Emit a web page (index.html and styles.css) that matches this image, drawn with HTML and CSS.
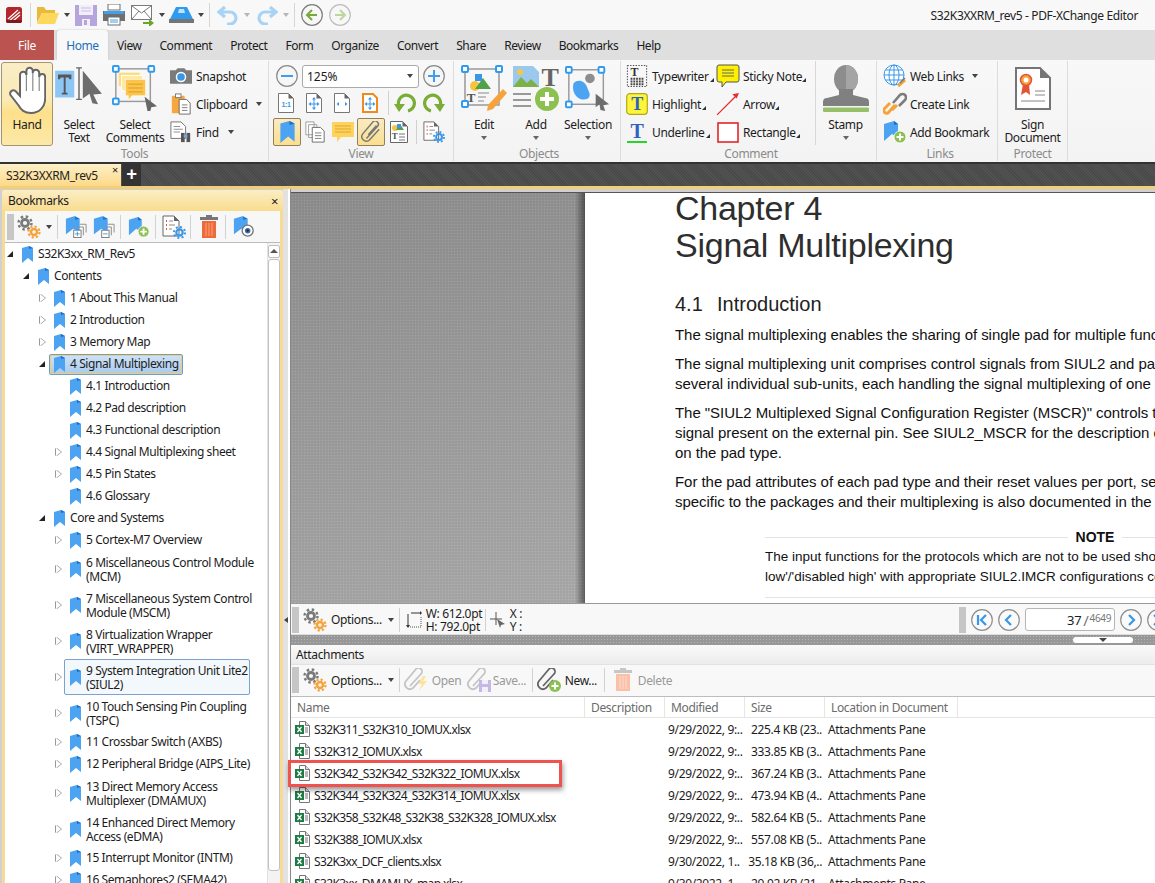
FILE: index.html
```html
<!DOCTYPE html>
<html lang="en">
<head>
<meta charset="utf-8">
<title>S32K3XXRM_rev5 - PDF-XChange Editor</title>
<link rel="stylesheet" href="styles.css">
</head>
<body>
<svg class="defs" aria-hidden="true">
  <defs>
    <symbol id="logo" viewBox="0 0 18 18"><rect x="1" y="1" width="16" height="16" rx="2.5" fill="#b3262b"/><path d="M3 13 L13 4 M4 15 L15 6 M8 15 L15 9" stroke="#fff" stroke-width="1.2" fill="none"/><path d="M1 14h16v1a2 2 0 0 1-2 2H3a2 2 0 0 1-2-2z" fill="#7d1a1e"/></symbol>
    <symbol id="folder" viewBox="0 0 24 20"><path d="M1 18V2h7l2 3h9v3H6z" fill="#e8b93a"/><path d="M1 19 L6 8h17l-4 11z" fill="#fdd85d"/></symbol>
    <symbol id="save" viewBox="0 0 22 22"><path d="M0 1h22v21H0z" fill="#b6a4dc"/><rect x="4" y="1" width="14" height="10" fill="#f2eefa"/><path d="M6 4h10M6 7h10" stroke="#c9bfe3"/><rect x="7" y="15" width="8" height="7" fill="#f2eefa"/><rect x="9" y="16" width="3" height="5" fill="#b6a4dc"/></symbol>
    <symbol id="print" viewBox="0 0 22 22"><rect x="5" y="0" width="12" height="6" fill="#fff" stroke="#6d6d6d"/><path d="M0 7h22v10H0z" fill="#6f6f6f"/><rect x="1" y="7" width="20" height="3" fill="#42a0ea"/><rect x="5" y="13" width="12" height="8" fill="#fff" stroke="#6d6d6d"/><path d="M7 16h8M7 18h8" stroke="#42a0ea"/></symbol>
    <symbol id="mail" viewBox="0 0 24 22"><rect x=".5" y="1.500" width="20" height="14" fill="#fff" stroke="#7a7a7a"/><path d="M1 2l9.500 7L20 2M1 15l7-8M20 15l-7-8" stroke="#7a7a7a" fill="none"/><path d="M12 19h8" stroke="#6aa62e" stroke-width="2"/><path d="M18 15l5 4-5 4z" fill="#6aa62e"/></symbol>
    <symbol id="cloud" viewBox="0 0 25 18"><path d="M7 1h11l6 12H1z" fill="#2e9bf0"/><path d="M10 3h5l1 4H9z" fill="#bfe2fb"/><rect x="0" y="13" width="25" height="4" fill="#757575"/></symbol>
    <symbol id="undo" viewBox="0 0 22 20"><path d="M8 2L2 7l6 5M3 7h10a6 6 0 0 1 0 12h-3" fill="none" stroke="#a9d3f4" stroke-width="3.200"/></symbol>
    <symbol id="redo" viewBox="0 0 22 20"><path d="M14 2l6 5-6 5M19 7H9a6 6 0 0 0 0 12h3" fill="none" stroke="#a9d3f4" stroke-width="3.200"/></symbol>
    <symbol id="back" viewBox="0 0 22 22"><circle cx="11" cy="11" r="10.300" fill="#f7f7f7" stroke="#7d7d7d" stroke-width="1.200"/><path d="M11 6l-5 5 5 5M6 11h10" fill="none" stroke="#76a83a" stroke-width="2"/></symbol>
    <symbol id="fwd" viewBox="0 0 22 22"><circle cx="11" cy="11" r="10.300" fill="#f7f7f7" stroke="#bdbdbd" stroke-width="1.200"/><path d="M11 6l5 5-5 5M16 11H6" fill="none" stroke="#bcd69c" stroke-width="2"/></symbol>
    <symbol id="hand" viewBox="0 0 37 48"><path d="M11 30V9a3.200 3.200 0 0 1 6.400 0V5a3.200 3.200 0 0 1 6.400 0V7a3.200 3.200 0 0 1 6.400 0v4a3 3 0 0 1 6 0v21c0 9-6 15-14 15-7 0-10-3-13-8L1.500 29c-1.500-3 2-6 5-4z" fill="#fff" stroke="#666" stroke-width="2"/><path d="M17.400 9v16M23.800 7v18M30.200 11v14" stroke="#8a8a8a" stroke-width="1.200"/></symbol>
    <symbol id="seltext" viewBox="0 0 50 44"><rect x="0" y="6" width="20" height="28" fill="#8cc6f5"/><path d="M3 10h14v5h-2l-1-2h-3v16h2v2H7v-2h2V13H6l-1 2H3z" fill="#565656"/><path d="M22 3h6M25 3v33M22 36h6" stroke="#666" stroke-width="1.500"/><path d="M29 6l20 24-9 1 5 10-6-1-3-10-7 5z" fill="#6d6d6d"/></symbol>
    <symbol id="selcom" viewBox="0 0 48 48"><rect x="4" y="4" width="36" height="34" fill="none" stroke="#999" stroke-width="1.500"/><rect x="7" y="8" width="22" height="14" fill="#ffdd7e"/><rect x="10" y="11" width="22" height="16" fill="#ffe8a0" stroke="#fff"/><path d="M14 15h21v17H21l-4 5v-5h-3z" fill="#fbc44d" stroke="#fff" stroke-width=".6"/><path d="M17 20h15M17 24h15M17 28h15" stroke="#dc9c23"/><path d="M34 33l13 10-6 1-1 4-3 0z" fill="#666"/><g fill="#fff" stroke="#2e9bf0" stroke-width="2"><rect x="1" y="1" width="6" height="6" rx="1"/><rect x="38" y="1" width="6" height="6" rx="1"/><rect x="1" y="35" width="6" height="6" rx="1"/></g></symbol>
    <symbol id="camera" viewBox="0 0 23 18"><path d="M0 3h6l2-2h7l2 2h6v14H0z" fill="#7b7b7b"/><circle cx="11.500" cy="10" r="5.500" fill="#fff"/><circle cx="11.500" cy="10" r="4" fill="#3a97e8"/></symbol>
    <symbol id="clipboard" viewBox="0 0 22 24"><rect x="1" y="3" width="14" height="19" rx="1" fill="#f6a740"/><rect x="5" y="1" width="6" height="4" fill="#fff" stroke="#777"/><path d="M9 7h8l4 4v12H9z" fill="#fff" stroke="#666"/><path d="M12 13h6M12 16h6M12 19h6" stroke="#777"/></symbol>
    <symbol id="find" viewBox="0 0 24 24"><path d="M1 1h11l5 5v13H1z" fill="#fff" stroke="#6d6d6d"/><path d="M4 6h7M4 9h10M4 12h7" stroke="#888"/><rect x="12" y="13" width="4" height="10" fill="#555"/><rect x="18" y="13" width="4" height="10" fill="#555"/><rect x="15" y="15" width="4" height="3" fill="#78a8d8"/></symbol>
    <symbol id="minus" viewBox="0 0 22 22"><circle cx="11" cy="11" r="10.300" fill="#f6f6f6" stroke="#8a8a8a" stroke-width="1.200"/><path d="M5 11h12" stroke="#3f9cee" stroke-width="2"/></symbol>
    <symbol id="plus" viewBox="0 0 22 22"><circle cx="11" cy="11" r="10.300" fill="#f6f6f6" stroke="#8a8a8a" stroke-width="1.200"/><path d="M5 11h12M11 5v12" stroke="#3f9cee" stroke-width="2"/></symbol>
    <symbol id="doc11" viewBox="0 0 16 20"><path d="M.5.500h10l5 5v14H.5z" fill="#fff" stroke="#777"/><path d="M10.500.500v5h5z" fill="#666"/><text x="8" y="14" font-size="7" font-family="Liberation Sans" text-anchor="middle" fill="#3a97e8" font-weight="700">1:1</text></symbol>
    <symbol id="docfit" viewBox="0 0 16 20"><path d="M.5.500h10l5 5v14H.5z" fill="#fff" stroke="#777"/><path d="M10.500.500v5h5z" fill="#666"/><path d="M8 4l2 2.500H6zM8 17l2-2.500H6zM2.500 11L5 9v4zM13.500 11L11 9v4z" fill="#3a97e8"/><path d="M8 6v9M4 11h8" stroke="#3a97e8"/></symbol>
    <symbol id="docwid" viewBox="0 0 16 20"><path d="M.5.500h10l5 5v14H.5z" fill="#fff" stroke="#777"/><path d="M10.500.500v5h5z" fill="#666"/><path d="M2.500 11L5 9v4zM13.500 11L11 9v4z" fill="#3a97e8"/></symbol>
    <symbol id="docvis" viewBox="0 0 16 20"><path d="M1 1h10l4 4v14H1z" fill="#fff" stroke="#f08a1c" stroke-width="2"/><path d="M8 4l2 2.500H6zM8 17l2-2.500H6zM2.500 11L5 9v4zM13.500 11L11 9v4z" fill="#3a97e8"/><path d="M8 6v9M4 11h8" stroke="#3a97e8"/></symbol>
    <symbol id="rotl" viewBox="0 0 22 22"><path d="M6 16a8 8 0 1 1 8 3" fill="none" stroke="#7aac36" stroke-width="3.200"/><path d="M0 12h11l-6 8z" fill="#7aac36"/></symbol>
    <symbol id="rotr" viewBox="0 0 22 22"><path d="M16 16a8 8 0 1 0-8 3" fill="none" stroke="#7aac36" stroke-width="3.200"/><path d="M22 12H11l6 8z" fill="#7aac36"/></symbol>
    <symbol id="bm" viewBox="0 0 11 17"><path d="M0 2L7 0l4 2v14l-5-4-6 5z" fill="#4ba3f2"/><path d="M7 0l4 2-4 1z" fill="#1f6fc0"/></symbol>
    <symbol id="pages" viewBox="0 0 22 24"><path d="M1 1h9v14H1zM4 4h9v14H4z" fill="#fff" stroke="#999"/><path d="M8 7h9l4 4v12H8z" fill="#fff" stroke="#666"/><path d="M11 13h7M11 16h7M11 19h7" stroke="#777"/></symbol>
    <symbol id="note" viewBox="0 0 22 22"><path d="M0 1h22v15H9l-4 5v-5H0z" fill="#fed35d"/><path d="M3 5h16M3 8h16M3 11h16" stroke="#e2a72d"/></symbol>
    <symbol id="clip" viewBox="0 0 24 24"><path d="M7 19L19 6a3.500 3.500 0 0 0-5-5L3 14a5 5 0 0 0 7 7l11-12M9 15l9-10" fill="none" stroke="#777" stroke-width="1.600"/></symbol>
    <symbol id="objdoc" viewBox="0 0 18 22"><path d="M.5.500h12l5 5v16H.5z" fill="#fff" stroke="#666"/><path d="M12.500.500v5h5z" fill="#666"/><circle cx="5" cy="7" r="3" fill="#f8c43d"/><path d="M6 9l4-6 4 6z" fill="#4fa24a"/><rect x="7" y="3" width="4" height="4" fill="#3a97e8"/><text x="4.500" y="18" font-size="9" font-family="Liberation Serif" font-weight="700" text-anchor="middle" fill="#555">T</text><path d="M9 13h6M9 16h6M9 19h6" stroke="#777"/></symbol>
    <symbol id="docset" viewBox="0 0 24 24"><path d="M1 1h11l5 5v15H1z" fill="#fff" stroke="#666"/><path d="M12 1v5h5z" fill="#666"/><path d="M4 6h1M4 10h1M4 14h1" stroke="#e25436" stroke-width="2"/><path d="M7 6h4M7 10h6M7 14h3" stroke="#888"/><circle cx="17.500" cy="17.500" r="3.200" fill="none" stroke="#3a97e8" stroke-width="2.200"/><circle cx="17.500" cy="17.500" r="5.500" fill="none" stroke="#3a97e8" stroke-width="2" stroke-dasharray="2 2.300"/></symbol>
    <symbol id="edit" viewBox="0 0 46 46"><rect x="4" y="4" width="34" height="36" fill="none" stroke="#999" stroke-width="1.500"/><circle cx="14" cy="21" r="5" fill="#f8c43d"/><path d="M14 24l8-11 8 11z" fill="#4fa24a"/><rect x="14" y="9" width="7" height="7" fill="#3a97e8"/><text x="10" y="37" font-size="13" font-family="Liberation Serif" font-weight="700" text-anchor="middle" fill="#555">T</text><path d="M17 28h11M17 32h8M17 36h6" stroke="#888"/><path d="M42 24l4 4-14 16-6 2 1-6z" fill="#f5a33a"/><g fill="#fff" stroke="#2e9bf0" stroke-width="2"><rect x="1" y="1" width="6" height="6" rx="1"/><rect x="35" y="1" width="6" height="6" rx="1"/><rect x="1" y="36" width="6" height="6" rx="1"/></g></symbol>
    <symbol id="add" viewBox="0 0 46 46"><path d="M0 1h20l6 6v15H0z" fill="#9bc9ee"/><path d="M0 22l8-10 6 6 4-4 8 8z" fill="#7eb04a"/><circle cx="7" cy="7" r="3" fill="#f5c64a"/><text x="37" y="21" font-size="26" font-family="Liberation Serif" font-weight="700" text-anchor="middle" fill="#666">T</text><path d="M0 29h18M0 35h18M0 41h18" stroke="#999" stroke-width="2"/><circle cx="34" cy="34" r="12" fill="#8cc152"/><path d="M27 34h14M34 27v14" stroke="#fff" stroke-width="4"/></symbol>
    <symbol id="selobj" viewBox="0 0 48 46"><rect x="4" y="4" width="36" height="36" fill="none" stroke="#999" stroke-width="1.500"/><circle cx="26" cy="13" r="5" fill="#8e8e8e"/><path d="M9 18c5-5 12-2 14 4s4 7 2 11c-4 4-12 2-15-4-2-4-2-8-1-11z" fill="#4ba3f2"/><path d="M32 29l14 11-6 1 2 6-5-1-1-6-4 3z" fill="#6d6d6d"/><g fill="#fff" stroke="#2e9bf0" stroke-width="2"><rect x="1" y="1" width="6" height="6" rx="1"/><rect x="35" y="1" width="6" height="6" rx="1"/><rect x="1" y="37" width="6" height="6" rx="1"/></g></symbol>
    <symbol id="typewriter" viewBox="0 0 22 24"><rect x=".5" y=".5" width="21" height="23" fill="none" stroke="#333" stroke-dasharray="1.500 1.500"/><text x="8" y="12" font-size="13" font-family="Liberation Serif" font-weight="700" text-anchor="middle" fill="#333">T</text><path d="M4 15h14M4 18h14M4 21h14" stroke="#444" stroke-width="2" stroke-dasharray="2 1"/></symbol>
    <symbol id="sticky" viewBox="0 0 24 24"><path d="M3 1h18a2 2 0 0 1 2 2v13a2 2 0 0 1-2 2H10l-4 5v-5H3a2 2 0 0 1-2-2V3a2 2 0 0 1 2-2z" fill="#fdf100" stroke="#555"/><path d="M6 6h12M6 9h12M6 12h12" stroke="#666"/></symbol>
    <symbol id="highlight" viewBox="0 0 22 22"><rect x=".7" y=".7" width="20.600" height="20.600" rx="3" fill="#fdf53a" stroke="#b3a818" stroke-width="1.200"/><text x="11" y="17" font-size="18" font-family="Liberation Serif" font-weight="700" text-anchor="middle" fill="#2f62c0">T</text></symbol>
    <symbol id="arrow" viewBox="0 0 22 22"><path d="M1 21L19 3" stroke="#e03030" stroke-width="1.200"/><path d="M21 1l-6 1 4 4z" fill="#e03030"/></symbol>
    <symbol id="underline" viewBox="0 0 22 22"><text x="11" y="17" font-size="20" font-family="Liberation Serif" font-weight="700" text-anchor="middle" fill="#2f62c0">T</text><path d="M1 21h20" stroke="#2ad42a" stroke-width="2"/></symbol>
    <symbol id="rect" viewBox="0 0 24 22"><rect x="2" y="2" width="20" height="19" fill="#fff" stroke="#e01818" stroke-width="1.500"/></symbol>
    <symbol id="stamp" viewBox="0 0 46 47"><ellipse cx="23" cy="14" rx="12" ry="14" fill="#8d8d8d"/><path d="M23 0a12 14 0 0 1 0 28z" fill="#a5a5a5"/><path d="M16 24h14v6l12 3a4 4 0 0 1 4 4v4H0v-4a4 4 0 0 1 4-4l12-3z" fill="#808080"/><rect x="0" y="42.500" width="46" height="4.500" rx="1" fill="#98c06a"/></symbol>
    <symbol id="globe" viewBox="0 0 24 24"><circle cx="11" cy="11" r="10" fill="#fff" stroke="#3a97e8"/><ellipse cx="11" cy="11" rx="5" ry="10" fill="none" stroke="#3a97e8"/><path d="M1 11h20M2.500 6h17M2.500 16h17M11 1v20" stroke="#3a97e8"/><path d="M15 22l7-6" stroke="#f5a33a" stroke-width="3"/><path d="M17 19l5-5" stroke="#777" stroke-width="1.500"/></symbol>
    <symbol id="link" viewBox="0 0 24 24"><path d="M10 11l7-8a3.500 3.500 0 0 1 5 5l-6 6" fill="none" stroke="#7d7d7d" stroke-width="2.600"/><path d="M12 13l-7 8a3 3 0 0 1-4-4l6-6" fill="none" stroke="#f5a33a" stroke-width="3"/><path d="M9 18l5-5" stroke="#f5a33a" stroke-width="3"/></symbol>
    <symbol id="bmadd" viewBox="0 0 24 24"><path d="M1 4l10-3 4 3v14l-6-4-8 7z" fill="#4ba3f2"/><path d="M11 1l4 3-4 1z" fill="#1f6fc0"/><circle cx="17" cy="17" r="6" fill="#8cc152" stroke="#fff" stroke-width=".8"/><path d="M13.500 17h7M17 13.500v7" stroke="#fff" stroke-width="2"/></symbol>
    <symbol id="sign" viewBox="0 0 36 43"><path d="M1 1h24l10 10v31H1z" fill="#fff" stroke="#757575" stroke-width="2"/><path d="M25 1v10h10z" fill="#757575"/><path d="M8 17l-2 11 5-3 4 3-1-11z" fill="#e25436"/><circle cx="11" cy="13" r="5.500" fill="#f5a33a" stroke="#e25436" stroke-width="1.500"/><circle cx="11" cy="13" r="2.500" fill="#fff"/><path d="M20 24h10M20 28h10M6 34h24" stroke="#888"/></symbol>
    <symbol id="gears" viewBox="0 0 24 24"><circle cx="8" cy="8" r="3.500" fill="none" stroke="#7a7a7a" stroke-width="2.800"/><circle cx="8" cy="8" r="6.500" fill="none" stroke="#7a7a7a" stroke-width="2.400" stroke-dasharray="2.500 2.600"/><circle cx="17" cy="17" r="3" fill="none" stroke="#f5a33a" stroke-width="2.400"/><circle cx="17" cy="17" r="5.500" fill="none" stroke="#f5a33a" stroke-width="2.200" stroke-dasharray="2.200 2.100"/></symbol>
    <symbol id="bmexp" viewBox="0 0 22 24"><path d="M0 3l10-3 5 3v15l-7-4-8 6z" fill="#4ba3f2"/><path d="M10 1l5 2-5 1z" fill="#1f6fc0"/><path d="M15 9h7v9M12 12h7v9" fill="none" stroke="#888"/><rect x="8.500" y="15.500" width="8" height="8" fill="#fff" stroke="#777"/><path d="M10 19.500h5M12.500 17v5" stroke="#3a97e8"/></symbol>
    <symbol id="bmcol" viewBox="0 0 22 24"><path d="M0 3l10-3 5 3v15l-7-4-8 6z" fill="#4ba3f2"/><path d="M10 1l5 2-5 1z" fill="#1f6fc0"/><path d="M15 9h7v9M12 12h7v9" fill="none" stroke="#888"/><rect x="8.500" y="15.500" width="8" height="8" fill="#fff" stroke="#777"/><path d="M10 19.500h5" stroke="#3a97e8"/></symbol>
    <symbol id="trash" viewBox="0 0 18 24"><rect x="6" y="0" width="6" height="3" fill="#777"/><rect x="0" y="2" width="18" height="3" fill="#777"/><path d="M2 6h14v17H2z" fill="#ef6a3a"/><path d="M6 8v13M9 8v13M12 8v13" stroke="#f9a27f"/></symbol>
    <symbol id="trashoff" viewBox="0 0 18 24"><rect x="6" y="0" width="6" height="3" fill="#c6c6c6"/><rect x="0" y="2" width="18" height="3" fill="#c6c6c6"/><path d="M2 6h14v17H2z" fill="#fbc0a8"/><path d="M6 8v13M9 8v13M12 8v13" stroke="#fddccf"/></symbol>
    <symbol id="bmeye" viewBox="0 0 22 24"><path d="M0 3l10-3 5 3v15l-7-4-8 6z" fill="#4ba3f2"/><path d="M10 1l5 2-5 1z" fill="#1f6fc0"/><circle cx="15" cy="16" r="6" fill="#fff" stroke="#777" stroke-width="1.500"/><circle cx="15" cy="16" r="3" fill="#3a6ea8"/><circle cx="15" cy="16" r="1.200" fill="#222"/></symbol>
    <symbol id="dims" viewBox="0 0 16 18"><path d="M5 2h10M2 3v13" stroke="#333"/><path d="M14 0l2 2-2 2zM0 14l2 3 2-3z" fill="#333"/><path d="M4 16h11V5" stroke="#555" stroke-dasharray="1 1" fill="none"/></symbol>
    <symbol id="cross" viewBox="0 0 16 18"><path d="M0 8h12M6 1v13" stroke="#555"/><path d="M7 8l8 5-4 1-1 3z" fill="#666"/></symbol>
    <symbol id="first" viewBox="0 0 22 22"><circle cx="11" cy="11" r="10.300" fill="#fafafa" stroke="#8f8f8f" stroke-width="1.200"/><path d="M7 6v10M15 6l-5 5 5 5" fill="none" stroke="#3a97e8" stroke-width="2.200"/></symbol>
    <symbol id="prev" viewBox="0 0 22 22"><circle cx="11" cy="11" r="10.300" fill="#fafafa" stroke="#8f8f8f" stroke-width="1.200"/><path d="M13 6l-5 5 5 5" fill="none" stroke="#3a97e8" stroke-width="2.200"/></symbol>
    <symbol id="next" viewBox="0 0 22 22"><circle cx="11" cy="11" r="10.300" fill="#fafafa" stroke="#8f8f8f" stroke-width="1.200"/><path d="M9 6l5 5-5 5" fill="none" stroke="#3a97e8" stroke-width="2.200"/></symbol>
    <symbol id="last" viewBox="0 0 22 22"><circle cx="11" cy="11" r="10.300" fill="#fafafa" stroke="#8f8f8f" stroke-width="1.200"/><path d="M15 6v10M7 6l5 5-5 5" fill="none" stroke="#3a97e8" stroke-width="2.200"/></symbol>
    <symbol id="clipopen" viewBox="0 0 24 24"><path d="M6 18L17 6a3.500 3.500 0 0 0-5-5L2 13a5 5 0 0 0 7 7l7-8" fill="none" stroke="#c4c4c4" stroke-width="1.800"/><path d="M19 8l-5 8h4l-3 7 8-10h-4l3-5z" fill="#fbe39a"/></symbol>
    <symbol id="clipsave" viewBox="0 0 24 24"><path d="M6 18L17 6a3.500 3.500 0 0 0-5-5L2 13a5 5 0 0 0 7 7l7-8" fill="none" stroke="#c4c4c4" stroke-width="1.800"/><rect x="12" y="12" width="12" height="12" fill="#c6b8e4"/><rect x="15" y="12" width="6" height="4" fill="#f2eefa"/><rect x="15" y="19" width="6" height="5" fill="#f2eefa"/></symbol>
    <symbol id="clipnew" viewBox="0 0 24 24"><path d="M6 18L17 6a3.500 3.500 0 0 0-5-5L2 13a5 5 0 0 0 7 7l7-8" fill="none" stroke="#666" stroke-width="1.800"/><circle cx="18" cy="18" r="6" fill="#8cc152"/><path d="M14.500 18h7M18 14.500v7" stroke="#fff" stroke-width="2"/></symbol>
    <symbol id="xls" viewBox="0 0 15 16"><path d="M4.500.500h6l4 4v11h-10z" fill="#fff" stroke="#777"/><path d="M10.500.500v4h4" fill="#ddd" stroke="#777"/><rect x="0" y="4" width="9" height="9" fill="#1e7b45"/><path d="M2.500 6l4 5M6.500 6l-4 5" stroke="#fff" stroke-width="1.300"/><path d="M10 7h3M10 9h3M10 11h3" stroke="#777"/></symbol>
  </defs>
</svg>

<div class="app">
  <header class="qat">
    <svg class="i18 q-logo"><use href="#logo"/></svg>
    <span class="q-sep"></span>
    <svg class="q-folder"><use href="#folder"/></svg><span class="drop q-d1"></span>
    <svg class="i22 q-save"><use href="#save"/></svg>
    <svg class="i22 q-print"><use href="#print"/></svg>
    <svg class="q-mail"><use href="#mail"/></svg><span class="drop q-d2"></span>
    <svg class="q-cloud"><use href="#cloud"/></svg><span class="drop q-d3"></span>
    <span class="q-sep q-s2"></span>
    <svg class="q-undo"><use href="#undo"/></svg><span class="drop off q-d4"></span>
    <svg class="q-undo q-redo"><use href="#redo"/></svg><span class="drop off q-d5"></span>
    <span class="q-sep q-s3"></span>
    <svg class="i22 q-back"><use href="#back"/></svg>
    <svg class="i22 q-fwd"><use href="#fwd"/></svg>
    <span class="title">S32K3XXRM_rev5 - PDF-XChange Editor</span>
  </header>

  <nav class="tabs">
    <span class="tab-file">File</span>
    <span class="tab active">Home</span>
    <span class="tab">View</span><span class="tab">Comment</span><span class="tab">Protect</span><span class="tab">Form</span><span class="tab">Organize</span><span class="tab">Convert</span><span class="tab">Share</span><span class="tab">Review</span><span class="tab">Bookmarks</span><span class="tab">Help</span>
  </nav>

  <section class="ribbon">
    <div class="group g-tools">
      <div class="gbody">
        <div class="big hand"><svg class="i-hand"><use href="#hand"/></svg><span class="lbl">Hand</span></div>
        <div class="big w-seltext"><svg class="i-seltext"><use href="#seltext"/></svg><span class="lbl">Select<br>Text</span></div>
        <div class="big w-selcom"><svg class="i46"><use href="#selcom"/></svg><span class="lbl">Select<br>Comments</span></div>
        <div class="col c-tools">
          <div class="srow"><svg class="i22"><use href="#camera"/></svg><span>Snapshot</span></div>
          <div class="srow"><svg class="i22"><use href="#clipboard"/></svg><span>Clipboard</span><span class="drop d-gap"></span></div>
          <div class="srow"><svg class="i22"><use href="#find"/></svg><span>Find</span><span class="drop d-gap"></span></div>
        </div>
      </div>
      <div class="glabel">Tools</div>
    </div>

    <div class="group g-view">
      <div class="gbody vcol">
        <div class="vrow1">
          <svg class="i22"><use href="#minus"/></svg>
          <div class="combo"><span>125%</span><span class="drop"></span></div>
          <svg class="i22"><use href="#plus"/></svg>
        </div>
        <div class="vrow2">
          <svg class="i-doc"><use href="#doc11"/></svg>
          <svg class="i-doc"><use href="#docfit"/></svg>
          <svg class="i-doc"><use href="#docwid"/></svg>
          <svg class="i-doc"><use href="#docvis"/></svg>
          <span class="vsep"></span>
          <svg class="i22"><use href="#rotl"/></svg>
          <svg class="i22"><use href="#rotr"/></svg>
        </div>
        <div class="vrow3">
          <span class="tog on"><svg class="i-bm22"><use href="#bm"/></svg></span>
          <span class="tog"><svg class="i22"><use href="#pages"/></svg></span>
          <span class="tog"><svg class="i22"><use href="#note"/></svg></span>
          <span class="tog on"><svg class="i22"><use href="#clip"/></svg></span>
          <span class="tog"><svg class="i-obj"><use href="#objdoc"/></svg></span>
          <span class="vsep v3"></span>
          <svg class="i22"><use href="#docset"/></svg>
        </div>
      </div>
      <div class="glabel">View</div>
    </div>

    <div class="group g-obj">
      <div class="gbody">
        <div class="big w-obj"><svg class="i46"><use href="#edit"/></svg><span class="lbl">Edit</span><span class="drop"></span></div>
        <div class="big w-obj"><svg class="i46"><use href="#add"/></svg><span class="lbl">Add</span><span class="drop"></span></div>
        <div class="big w-obj"><svg class="i46"><use href="#selobj"/></svg><span class="lbl">Selection</span><span class="drop"></span></div>
      </div>
      <div class="glabel">Objects</div>
    </div>

    <div class="group g-com">
      <div class="gbody">
        <div class="col c-com1">
          <div class="srow"><svg class="i22"><use href="#typewriter"/></svg><span>Typewriter</span><i class="corner"></i></div>
          <div class="srow"><svg class="i22"><use href="#highlight"/></svg><span>Highlight</span><i class="corner"></i></div>
          <div class="srow"><svg class="i22"><use href="#underline"/></svg><span>Underline</span><i class="corner"></i></div>
        </div>
        <div class="col c-com2">
          <div class="srow"><svg class="i24"><use href="#sticky"/></svg><span>Sticky Note</span><i class="corner"></i></div>
          <div class="srow"><svg class="i24"><use href="#arrow"/></svg><span>Arrow</span><i class="corner"></i></div>
          <div class="srow"><svg class="i24"><use href="#rect"/></svg><span>Rectangle</span><i class="corner"></i></div>
        </div>
        <span class="gsep"></span>
        <div class="big w-stamp"><svg class="i-stamp"><use href="#stamp"/></svg><span class="lbl">Stamp</span><span class="drop"></span></div>
      </div>
      <div class="glabel">Comment</div>
    </div>

    <div class="group g-links">
      <div class="gbody">
        <div class="col c-links">
          <div class="srow"><svg class="i24"><use href="#globe"/></svg><span>Web Links</span><span class="drop d-gap"></span></div>
          <div class="srow"><svg class="i24"><use href="#link"/></svg><span>Create Link</span></div>
          <div class="srow"><svg class="i24"><use href="#bmadd"/></svg><span>Add Bookmark</span></div>
        </div>
      </div>
      <div class="glabel">Links</div>
    </div>

    <div class="group g-prot">
      <div class="gbody">
        <div class="big w-sign"><svg class="i-sign"><use href="#sign"/></svg><span class="lbl">Sign<br>Document</span></div>
      </div>
      <div class="glabel">Protect</div>
    </div>
  </section>

  <div class="docbar">
    <div class="doctab"><span>S32K3XXRM_rev5</span><b>×</b></div>
    <div class="newtab">+</div>
  </div>

  <main class="main">
    <aside class="pane">
      <div class="pane-title"><span>Bookmarks</span><b>×</b></div>
      <div class="pane-tools">
        <span class="grip"></span>
        <svg class="i24 ml3"><use href="#gears"/></svg><span class="drop ml5"></span>
        <span class="tsep ml5"></span>
        <svg class="i22 ml7"><use href="#bmexp"/></svg><svg class="i22 ml6"><use href="#bmcol"/></svg>
        <span class="tsep ml5"></span>
        <svg class="i22 ml7"><use href="#bmadd"/></svg>
        <span class="tsep ml5"></span>
        <svg class="i24 ml6"><use href="#docset"/></svg>
        <span class="tsep ml4"></span>
        <svg class="i-trash ml9"><use href="#trash"/></svg>
        <span class="tsep ml7"></span>
        <svg class="i22 ml7"><use href="#bmeye"/></svg>
      </div>
      <div class="tree-wrap">
        <div class="tree">
          <div class="row l0"><i class="tw open"></i><div class="item"><svg class="bm"><use href="#bm"/></svg><span>S32K3xx_RM_Rev5</span></div></div>
          <div class="row l1"><i class="tw open"></i><div class="item"><svg class="bm"><use href="#bm"/></svg><span>Contents</span></div></div>
          <div class="row l2"><i class="tw"></i><div class="item"><svg class="bm"><use href="#bm"/></svg><span>1 About This Manual</span></div></div>
          <div class="row l2"><i class="tw"></i><div class="item"><svg class="bm"><use href="#bm"/></svg><span>2 Introduction</span></div></div>
          <div class="row l2"><i class="tw"></i><div class="item"><svg class="bm"><use href="#bm"/></svg><span>3 Memory Map</span></div></div>
          <div class="row l2"><i class="tw open"></i><div class="item sel"><svg class="bm"><use href="#bm"/></svg><span>4 Signal Multiplexing</span></div></div>
          <div class="row l3"><i class="tw none"></i><div class="item"><svg class="bm"><use href="#bm"/></svg><span>4.1 Introduction</span></div></div>
          <div class="row l3"><i class="tw none"></i><div class="item"><svg class="bm"><use href="#bm"/></svg><span>4.2 Pad description</span></div></div>
          <div class="row l3"><i class="tw none"></i><div class="item"><svg class="bm"><use href="#bm"/></svg><span>4.3 Functional description</span></div></div>
          <div class="row l3"><i class="tw"></i><div class="item"><svg class="bm"><use href="#bm"/></svg><span>4.4 Signal Multiplexing sheet</span></div></div>
          <div class="row l3"><i class="tw"></i><div class="item"><svg class="bm"><use href="#bm"/></svg><span>4.5 Pin States</span></div></div>
          <div class="row l3"><i class="tw none"></i><div class="item"><svg class="bm"><use href="#bm"/></svg><span>4.6 Glossary</span></div></div>
          <div class="row l2"><i class="tw open"></i><div class="item"><svg class="bm"><use href="#bm"/></svg><span>Core and Systems</span></div></div>
          <div class="row l3"><i class="tw"></i><div class="item"><svg class="bm"><use href="#bm"/></svg><span>5 Cortex-M7 Overview</span></div></div>
          <div class="row l3 two"><i class="tw"></i><div class="item"><svg class="bm"><use href="#bm"/></svg><span>6 Miscellaneous Control Module<br>(MCM)</span></div></div>
          <div class="row l3 two"><i class="tw"></i><div class="item"><svg class="bm"><use href="#bm"/></svg><span>7 Miscellaneous System Control<br>Module (MSCM)</span></div></div>
          <div class="row l3 two"><i class="tw"></i><div class="item"><svg class="bm"><use href="#bm"/></svg><span>8 Virtualization Wrapper<br>(VIRT_WRAPPER)</span></div></div>
          <div class="row l3 two"><i class="tw"></i><div class="item boxed"><svg class="bm"><use href="#bm"/></svg><span>9 System Integration Unit Lite2<br>(SIUL2)</span></div></div>
          <div class="row l3 two"><i class="tw"></i><div class="item"><svg class="bm"><use href="#bm"/></svg><span>10 Touch Sensing Pin Coupling<br>(TSPC)</span></div></div>
          <div class="row l3"><i class="tw"></i><div class="item"><svg class="bm"><use href="#bm"/></svg><span>11 Crossbar Switch (AXBS)</span></div></div>
          <div class="row l3"><i class="tw"></i><div class="item"><svg class="bm"><use href="#bm"/></svg><span>12 Peripheral Bridge (AIPS_Lite)</span></div></div>
          <div class="row l3 two"><i class="tw"></i><div class="item"><svg class="bm"><use href="#bm"/></svg><span>13 Direct Memory Access<br>Multiplexer (DMAMUX)</span></div></div>
          <div class="row l3 two"><i class="tw"></i><div class="item"><svg class="bm"><use href="#bm"/></svg><span>14 Enhanced Direct Memory<br>Access (eDMA)</span></div></div>
          <div class="row l3"><i class="tw"></i><div class="item"><svg class="bm"><use href="#bm"/></svg><span>15 Interrupt Monitor (INTM)</span></div></div>
          <div class="row l3"><i class="tw"></i><div class="item"><svg class="bm"><use href="#bm"/></svg><span>16 Semaphores2 (SEMA42)</span></div></div>
        </div>
        <div class="scroll"><div class="sc-up"></div><div class="sc-thumb"></div></div>
      </div>
    </aside>

    <div class="split"><i></i></div>

    <div class="right">
      <div class="docview">
        <div class="canvas"></div>
        <article class="page">
          <h1>Chapter 4<br>Signal Multiplexing</h1>
          <h2><span>4.1</span>Introduction</h2>
          <p>The signal multiplexing enables the sharing of single pad for multiple functions.</p>
          <p>The signal multiplexing unit comprises control signals from SIUL2 and pad signals, and<br>several individual sub-units, each handling the signal multiplexing of one pad.</p>
          <p>The "SIUL2 Multiplexed Signal Configuration Register (MSCR)" controls the function of the<br>signal present on the external pin. See SIUL2_MSCR for the description of the options, depending<br>on the pad type.</p>
          <p>For the pad attributes of each pad type and their reset values per port, see the attachments,<br>specific to the packages and their multiplexing is also documented in the attachments.</p>
          <div class="note">
            <div class="note-head"><span>NOTE</span></div>
            <div class="note-body">The input functions for the protocols which are not to be used should be configured as 'disabled<br>low'/'disabled high' with appropriate SIUL2.IMCR configurations consistently.</div>
          </div>
        </article>
      </div>

      <div class="status">
        <span class="grip"></span>
        <svg class="i24"><use href="#gears"/></svg>
        <span class="opt">Options...</span><span class="drop"></span>
        <span class="tsep"></span>
        <svg class="i-dim"><use href="#dims"/></svg>
        <div class="dimtext"><span>W: 612.0pt</span><span>H: 792.0pt</span></div>
        <span class="tsep s-short"></span>
        <svg class="i-cross"><use href="#cross"/></svg>
        <div class="dimtext xy"><span>X :</span><span>Y :</span></div>
        <div class="pager">
          <span class="grip"></span>
          <svg class="i22"><use href="#first"/></svg>
          <svg class="i22"><use href="#prev"/></svg>
          <div class="pageinput"><span>37</span><em>/</em><small>4649</small></div>
          <svg class="i22"><use href="#next"/></svg>
          <svg class="i22"><use href="#last"/></svg>
        </div>
      </div>

      <div class="band"><span class="handle"></span></div>

      <section class="attach">
        <div class="att-title">Attachments</div>
        <div class="att-tools">
          <span class="grip"></span>
          <svg class="i24"><use href="#gears"/></svg>
          <span class="opt">Options...</span><span class="drop"></span>
          <span class="tsep"></span>
          <svg class="i24"><use href="#clipopen"/></svg><span class="off t-open">Open</span>
          <svg class="i24"><use href="#clipsave"/></svg><span class="off t-save">Save...</span>
          <span class="tsep"></span>
          <svg class="i24"><use href="#clipnew"/></svg><span class="t-new">New...</span>
          <span class="tsep"></span>
          <svg class="i-trash t-trash"><use href="#trashoff"/></svg><span class="off t-del">Delete</span>
        </div>
        <div class="grid head">
          <span>Name</span><span>Description</span><span>Modified</span><span>Size</span><span>Location in Document</span>
        </div>
        <div class="rows">
          <div class="grid"><span class="fname"><svg class="xls"><use href="#xls"/></svg>S32K311_S32K310_IOMUX.xlsx</span><span></span><span>9/29/2022, 9:..</span><span class="sz">225.4 KB (23..</span><span>Attachments Pane</span></div>
          <div class="grid"><span class="fname"><svg class="xls"><use href="#xls"/></svg>S32K312_IOMUX.xlsx</span><span></span><span>9/29/2022, 9:..</span><span class="sz">333.85 KB (3..</span><span>Attachments Pane</span></div>
          <div class="grid"><span class="fname"><svg class="xls"><use href="#xls"/></svg>S32K342_S32K342_S32K322_IOMUX.xlsx</span><span></span><span>9/29/2022, 9:..</span><span class="sz">367.24 KB (3..</span><span>Attachments Pane</span></div>
          <div class="grid"><span class="fname"><svg class="xls"><use href="#xls"/></svg>S32K344_S32K324_S32K314_IOMUX.xlsx</span><span></span><span>9/29/2022, 9:..</span><span class="sz">473.94 KB (4..</span><span>Attachments Pane</span></div>
          <div class="grid"><span class="fname"><svg class="xls"><use href="#xls"/></svg>S32K358_S32K48_S32K38_S32K328_IOMUX.xlsx</span><span></span><span>9/29/2022, 9:..</span><span class="sz">582.64 KB (5..</span><span>Attachments Pane</span></div>
          <div class="grid"><span class="fname"><svg class="xls"><use href="#xls"/></svg>S32K388_IOMUX.xlsx</span><span></span><span>9/29/2022, 9:..</span><span class="sz">557.08 KB (5..</span><span>Attachments Pane</span></div>
          <div class="grid"><span class="fname"><svg class="xls"><use href="#xls"/></svg>S32K3xx_DCF_clients.xlsx</span><span></span><span>9/30/2022, 1..</span><span class="sz">35.18 KB (36,..</span><span>Attachments Pane</span></div>
          <div class="grid"><span class="fname"><svg class="xls"><use href="#xls"/></svg>S32K3xx_DMAMUX_map.xlsx</span><span></span><span>9/30/2022, 1..</span><span class="sz">20.92 KB (21..</span><span>Attachments Pane</span></div>
          <div class="redbox"></div>
        </div>
      </section>
    </div>
  </main>
</div>
</body>
</html>
```

FILE: styles.css
```css
* { box-sizing: border-box; }
html, body { margin: 0; padding: 0; }
body { width: 1155px; height: 883px; overflow: hidden; font-family: "Noto Sans", "Liberation Sans", sans-serif; font-size: 12px; letter-spacing: -0.35px; color: #1c1c1c; background: #f5f5f5; }
.defs { position: absolute; width: 0; height: 0; }
svg { display: block; flex: none; overflow: visible; }
.app { width: 1155px; height: 883px; display: flex; flex-direction: column; overflow: hidden; }
.i18 { width: 18px; height: 18px; }
.i22 { width: 22px; height: 22px; }
.i24 { width: 24px; height: 24px; }
.i46 { width: 46px; height: 46px; }
.ml3 { margin-left: 3px; }
.ml4 { margin-left: 4px; }
.ml5 { margin-left: 5px; }
.ml6 { margin-left: 6px; }
.ml7 { margin-left: 7px; }
.ml9 { margin-left: 9px; }

.drop { display: inline-block; flex: none; width: 0; height: 0; border-left: 3.5px solid transparent; border-right: 3.5px solid transparent; border-top: 4px solid #444; }
.drop.off { border-top-color: #b5b5b5; }
.d-gap { margin-left: 5px; }

/* Quick access */
.qat { height: 30px; display: flex; align-items: center; padding-left: 5px; background: #f8f8f8; flex: none; }
.q-sep { width: 1px; height: 24px; background: #d6d6d6; margin-left: 7px; }
.q-folder { width: 24px; height: 20px; margin-left: 5px; }
.q-d1 { margin-left: 4px; }
.q-save { margin-left: 5px; }
.q-print { margin-left: 6px; }
.q-mail { width: 24px; height: 22px; margin-left: 6px; }
.q-d2 { margin-left: 4px; }
.q-cloud { width: 25px; height: 18px; margin-left: 4px; }
.q-d3 { margin-left: 4px; }
.q-s2 { margin-left: 5px; }
.q-undo { width: 22px; height: 20px; margin-left: 7px; }
.q-d4 { margin-left: 5px; }
.q-redo { margin-left: 6px; }
.q-d5 { margin-left: 5px; }
.q-s3 { margin-left: 5px; }
.q-back { margin-left: 6px; }
.q-fwd { margin-left: 6px; }
.title { margin-left: auto; margin-right: 17px; color: #222; }

/* Tabs */
.tabs { height: 30px; display: flex; align-items: stretch; background: #dfdfdf; flex: none; }
.tab-file { width: 54px; background: #bb5350; color: #fff; display: flex; align-items: center; justify-content: center; margin-right: 3px; }
.tab { padding: 0 9px; display: flex; align-items: center; letter-spacing: -0.45px; }
.tab.active { background: #f8f8f8; color: #1f6fb8; border-radius: 3px 3px 0 0; box-shadow: 0 0 2px #bbb; padding: 0 9px; width: 51px; justify-content: center; }

/* Ribbon */
.ribbon { height: 102px; display: flex; background: linear-gradient(#f8f8f8, #f3f3f3); flex: none; padding-top: 1px; }
.group { display: flex; flex-direction: column; border-right: 1px solid #dcdcdc; height: 100px; }
.gbody { height: 86px; display: flex; }
.glabel { height: 14px; line-height: 14px; text-align: center; color: #8b8b8b; }
.g-tools { width: 269px; padding-left: 1px; }
.g-view { width: 185px; }
.g-obj { width: 167px; padding-left: 4px; }
.g-com { width: 256px; padding-left: 5px; }
.g-links { width: 121px; padding-left: 6px; }
.g-prot { width: 70px; }
.big { display: flex; flex-direction: column; align-items: center; justify-content: flex-start; line-height: 13px; flex: none; }
.big .lbl { text-align: center; }
.big .drop { margin-top: 5px; border-top-color: #666; }
.hand { width: 52px; height: 84px; margin-top: 1px; border: 1px solid #a8946a; border-radius: 3px; background: linear-gradient(#faedc6 0%, #fbeab4 45%, #fde08a 60%, #fce9a8 100%); }
.i-hand { width: 37px; height: 48px; margin-top: 3px; margin-bottom: 4px; }
.w-seltext { width: 52px; }
.i-seltext { width: 48px; height: 42px; margin-top: 4px; margin-bottom: 11px; }
.w-selcom { width: 60px; }
.w-selcom svg { margin-top: 4px; margin-bottom: 7px; }
.col { display: flex; flex-direction: column; flex: none; padding-top: 1px; }
.srow { height: 28px; display: flex; align-items: center; gap: 4px; white-space: nowrap; }
.c-tools { margin-left: 5px; }
.c-links .srow { gap: 3px; }
.corner { display: inline-block; width: 0; height: 0; border-left: 4px solid transparent; border-bottom: 4px solid #333; margin: 8px 0 0 -3px; }

.vcol { flex-direction: column; padding-left: 7px; }
.vrow1 { display: flex; align-items: center; height: 28px; gap: 4px; padding-top: 2px; }
.combo { width: 117px; height: 23px; border: 1px solid #a9a9a9; border-radius: 3px; background: #fff; display: flex; align-items: center; justify-content: space-between; padding: 0 5px 0 4px; letter-spacing: 0; }
.vrow2 { display: flex; align-items: center; height: 28px; padding-left: 2px; }
.i-doc { width: 16px; height: 20px; margin-right: 12px; }
.vsep { width: 1px; height: 24px; background: #d0d0d0; margin: 0 5px 0 -2px; }
.vrow2 .i22 + .i22 { margin-left: 7px; }
.vrow3 { display: flex; align-items: center; height: 29px; margin-left: -3px; }
.tog { width: 28px; height: 28px; display: flex; align-items: center; justify-content: center; border: 1px solid transparent; border-radius: 2px; }
.tog.on { border-color: #93805a; background: linear-gradient(#f9ebc2, #fbdf8e); }
.i-bm22 { width: 15px; height: 22px; }
.i-obj { width: 18px; height: 22px; }
.vrow3 .v3 { margin: 0 6px 0 3px; }
.w-obj { width: 52px; }
.w-obj svg { margin-top: 4px; margin-bottom: 7px; }
.c-com1 { width: 90px; }
.c-com2 { width: 99px; }
.c-com2 .srow { gap: 3px; }
.gsep { width: 1px; background: #d8d8d8; height: 84px; flex: none; }
.w-stamp { width: 59px; }
.i-stamp { width: 46px; height: 47px; margin-top: 4px; margin-bottom: 6px; }
.w-sign { width: 69px; }
.i-sign { width: 36px; height: 43px; margin-top: 6px; margin-bottom: 8px; }

/* Document tabs bar */
.docbar { height: 27px; flex: none; display: flex; align-items: flex-end; background: #4a4a4a repeating-linear-gradient(45deg, #494949 0 1px, #525252 1px 2px); border-top: 2px solid #333; border-bottom: 3px solid #f2cf77; }
.doctab { width: 121px; height: 22px; display: flex; align-items: center; justify-content: space-between; padding: 0 3px 0 6px; background: linear-gradient(#fdf0c8, #fcd988); color: #222; }
.doctab b { font-weight: 400; font-size: 11px; align-self: flex-start; line-height: 12px; }
.newtab { width: 19px; height: 22px; color: #fff; background: #333; font-size: 19px; font-weight: 700; line-height: 20px; text-align: center; margin-left: 1px; }

/* Main */
.main { flex: 1; min-height: 0; display: flex; background: #d0d0d0; }
.pane { width: 281px; margin-left: 2px; margin-top: 1px; display: flex; flex-direction: column; background: #fbe39c; border: solid #f5dc94; border-width: 0 3px; flex: none; }
.pane-title { height: 21px; display: flex; align-items: center; justify-content: space-between; background: linear-gradient(#fbeec6, #f9dc8d); margin: 0 -3px; padding: 0 5px 0 6px; border-radius: 3px 3px 0 0; flex: none; }
.pane-title b { font-weight: 400; font-size: 13px; }
.pane-tools { height: 32px; background: #f7f7f7; display: flex; align-items: center; flex: none; border-bottom: 1px solid #bbb; padding-left: 2px; }
.grip { width: 7px; height: 26px; flex: none; background: radial-gradient(#c6c6c6 1px, transparent 1px) 0 0 / 2px 2px; }
.tsep { width: 1px; height: 24px; background: #d2d2d2; flex: none; }
.i-trash { width: 18px; height: 24px; }
.tree-wrap { flex: 1; min-height: 0; display: flex; background: #fff; overflow: hidden; }
.tree { flex: 1; overflow: hidden; letter-spacing: -0.42px; }
.row { height: 22px; display: flex; align-items: center; white-space: nowrap; }
.row.two { height: 36px; }
.row.two .item span { padding-top: 2px; }
.row.l1 { padding-left: 16px; }
.row.l2 { padding-left: 32px; }
.row.l3 { padding-left: 48px; }
.tw { flex: none; width: 12px; height: 10px; display: block; position: relative; }
.tw::after { content: ""; position: absolute; left: 3px; top: 1px; border-left: 5px solid #fff; border-top: 4px solid transparent; border-bottom: 4px solid transparent; filter: drop-shadow(-1px 0 0 #999) drop-shadow(1px 0 0 #999); }
.tw.none::after { display: none; }
.tw.open::after { left: 2px; top: 2px; border: 0; border-bottom: 6px solid #222; border-left: 6px solid transparent; filter: none; }
.item { display: flex; align-items: center; gap: 5px; padding: 0 3px 0 4px; border: 1px solid transparent; border-radius: 2px; line-height: 14.5px; }
.bm { width: 11px; height: 17px; }
.item.sel { height: 21px; border-color: #6e9dc8; outline: 1px solid #f3cc6c; outline-offset: -2px; background: linear-gradient(#cfe2f6, #a9cbef); }
.item.boxed { height: 36px; width: 186px; margin-left: -1px; padding-left: 5px; border-color: #7da2ce; background: #f3f8fd; }
.scroll { width: 13px; flex: none; background: #f3f3f3; border-left: 1px solid #e2e2e2; padding-top: 2px; }
.sc-up { height: 13px; border: 1px solid #bfbfbf; border-radius: 2px; background: #fdfdfd; position: relative; }
.sc-up::after { content: ""; position: absolute; left: 1px; top: 3px; border-left: 4px solid transparent; border-right: 4px solid transparent; border-bottom: 4px solid #555; }
.sc-thumb { height: 612px; margin-top: 1px; border: 1px solid #c2c2c2; border-radius: 3px; background: #fff; }
.split { width: 8px; flex: none; background: linear-gradient(90deg, #e2e2e2 0 5px, #fff 5px 7px, #888 7px 8px); position: relative; }
.split i { position: absolute; left: 1px; top: 428px; border-right: 4px solid #444; border-top: 3px solid transparent; border-bottom: 3px solid transparent; }

/* Right column */
.right { width: 864px; flex: none; display: flex; flex-direction: column; margin-top: 3px; }
.docview { height: 411px; flex: none; display: flex; overflow: hidden; background: #fff; border-top: 1px solid #555; }
.canvas { width: 294px; flex: none; background:
  linear-gradient(90deg, transparent 284px, rgba(0,0,0,.45) 294px),
  linear-gradient(165deg, rgba(0,0,0,.1), rgba(255,255,255,.12)),
  radial-gradient(circle, #aaa .7px, transparent 1px) 0 0 / 3px 3px,
  radial-gradient(circle, #8e8e8e .7px, transparent 1px) 1.5px 1.5px / 3px 3px,
  #9c9c9c; }
.page { flex: 1; background: #fff; padding-left: 90px; font-family: "Liberation Sans", Arial, sans-serif; letter-spacing: 0; color: #2e2e2e; white-space: nowrap; overflow: hidden; }
.page h1 { margin: -3px 0 0; font-size: 34px; line-height: 37px; font-weight: 400; letter-spacing: -0.25px; }
.page h2 { margin: 28px 0 9px; font-size: 20px; line-height: 24px; font-weight: 400; color: #222; }
.page h2 span { display: inline-block; width: 42px; }
.page p { margin: 0 0 9px; font-size: 15px; line-height: 20px; color: #111; letter-spacing: -0.05px; }
.note { margin-left: 90px; margin-top: 16px; }
.note-head { display: flex; align-items: center; width: 660px; font-size: 14px; font-weight: 700; color: #111; line-height: 19px; }
.note-head::before, .note-head::after { content: ""; flex: 1; height: 1px; background: #e4e4e4; }
.note-head span { padding: 0 8px; }
.note-body { font-size: 13.500px; line-height: 20px; color: #111; border-bottom: 1px solid #e4e4e4; padding-bottom: 10px; width: 660px; }

.status { height: 32px; flex: none; display: flex; align-items: center; background: #f8f8f8; border-top: 1px solid #999; border-bottom: 1px solid #ddd; padding: 1px 0 0 1px; gap: 4px; }
.opt { color: #222; }
.status .opt, .att-tools .opt { margin-right: 2px; }
.status .drop, .att-tools .drop { margin-right: 1px; }
.i-dim { width: 16px; height: 18px; margin-left: 2px; }
.i-cross { width: 16px; height: 18px; }
.dimtext { display: flex; flex-direction: column; line-height: 13px; width: 55px; white-space: nowrap; }
.dimtext.xy { width: 20px; }
.s-short { height: 22px; }
.pager { margin-left: auto; display: flex; align-items: center; gap: 5px; margin-right: -14px; }
.pageinput { width: 90px; height: 23px; border: 1px solid #b5b5b5; border-radius: 3px; background: #fff; display: flex; align-items: center; justify-content: flex-end; padding-right: 3px; font-size: 13px; }
.pageinput em { font-style: normal; color: #777; font-size: 15px; margin: 0 1px 0 2px; }
.pageinput small { color: #777; font-size: 10px; margin-top: -3px; }
.band { height: 10px; flex: none; background:
  radial-gradient(circle, #b4b4b4 .7px, transparent 1px) 0 0 / 3px 3px,
  #979797; display: flex; align-items: center; }
.handle { width: 60px; height: 6px; background: #fff; border-radius: 3px; margin-left: 782px; position: relative; }
.handle::after { content: ""; position: absolute; left: 26px; top: 1px; border-left: 4px solid transparent; border-right: 4px solid transparent; border-top: 4px solid #444; }

.attach { flex: 1; min-height: 0; display: flex; flex-direction: column; background: #fff; }
.att-title { height: 20px; flex: none; line-height: 20px; padding-left: 5px; background: linear-gradient(#fafafa, #ececec); border-bottom: 1px solid #e2e2e2; }
.att-tools { height: 32px; flex: none; display: flex; align-items: center; background: #f8f8f8; padding: 0 0 1px 1px; gap: 4px; border-bottom: 1px solid #bdbdbd; }
.off { color: #9a9a9a; }
.t-open { width: 31px; }
.t-save { width: 35px; margin-left: -2px; }
.t-new { width: 35px; }
.att-tools .t-trash { margin: 0 2px 0 5px; }
.grid { display: grid; grid-template-columns: 294px 80px 80px 80px 133px; height: 22px; align-items: center; white-space: nowrap; }
.grid > span { padding-left: 3px; overflow: hidden; }
.grid.head { height: 21px; flex: none; border-bottom: 1px solid #e6e6e6; color: #6b6b6b; }
.grid.head > span { height: 100%; line-height: 21px; padding-left: 6px; border-right: 1px solid #e6e6e6; }
.rows { position: relative; }
.fname { display: flex; align-items: center; gap: 4px; padding-left: 4px !important; letter-spacing: -0.6px; }
.xls { width: 15px; height: 16px; }
.sz { text-align: right; padding-right: 3px; padding-left: 0 !important; }
.redbox { position: absolute; left: -3px; top: 42px; width: 274px; height: 27px; border: 3px solid #ef5350; box-shadow: 1px 3px 5px rgba(0,0,0,.4); }
```
